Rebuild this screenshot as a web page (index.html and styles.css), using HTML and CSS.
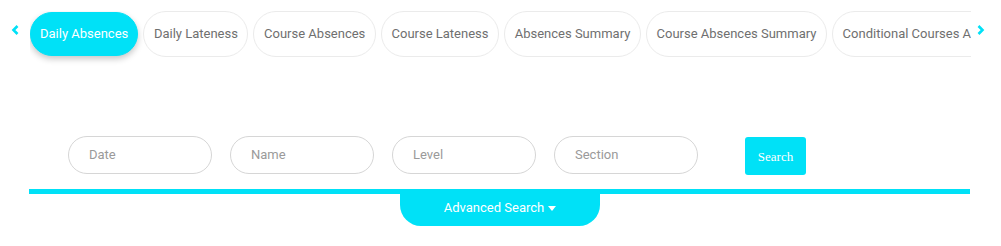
FILE: index.html
```html
<!DOCTYPE html>
<html>
<head>
<meta charset="utf-8">
<link rel="stylesheet" href="styles.css">
</head>
<body>
<div class="tabs-row">
  <div class="arrow arrow-left">
    <svg width="9" height="12" viewBox="0 0 9 12"><path d="M6.5 2 L2.5 6 L6.5 10" fill="none" stroke="#00e1f7" stroke-width="2.6"/></svg>
  </div>
  <div class="tabs-viewport">
    <div class="tabs">
      <div class="tab active">Daily Absences</div>
      <div class="tab">Daily Lateness</div>
      <div class="tab">Course Absences</div>
      <div class="tab">Course Lateness</div>
      <div class="tab">Absences Summary</div>
      <div class="tab">Course Absences Summary</div>
      <div class="tab">Conditional Courses Absences</div>
    </div>
  </div>
  <div class="arrow arrow-right">
    <svg width="9" height="12" viewBox="0 0 9 12"><path d="M2.5 2 L6.5 6 L2.5 10" fill="none" stroke="#00e1f7" stroke-width="2.6"/></svg>
  </div>
</div>

<div class="search-row">
  <div class="field">Date</div>
  <div class="field">Name</div>
  <div class="field">Level</div>
  <div class="field">Section</div>
  <button class="search-btn">Search</button>
</div>

<div class="divider"></div>
<div class="adv-wrap">
  <div class="adv">Advanced Search <span class="caret"></span></div>
</div>
</body>
</html>
```
FILE: styles.css
```css
* { box-sizing: border-box; }
body {
  margin: 0;
  background: #fff;
  font-family: Roboto, "Liberation Sans", sans-serif;
}
.tabs-row {
  display: flex;
  align-items: flex-start;
  padding-top: 11px;
  height: 68px;
}
.arrow {
  display: flex;
  align-items: center;
  height: 38px;
}
.arrow-left {
  width: 30px;
  padding-left: 11px;
}
.arrow-right {
  padding-left: 5px;
}
.tabs-viewport {
  width: 941px;
  overflow: hidden;
  padding-bottom: 10px;
}
.tabs {
  display: flex;
  gap: 5px;
  white-space: nowrap;
}
.tab {
  flex: none;
  height: 46px;
  padding: 0 9.6px 1px;
  border: 1px solid #ebebeb;
  border-radius: 23px;
  display: flex;
  align-items: center;
  font-size: 13px;
  color: #6f6f6f;
}
.tab.active {
  background: #00e1f7;
  border-color: #00e1f7;
  color: #fff;
  height: 44px;
  margin-top: 1px;
  box-shadow: 0 3px 6px rgba(0,0,0,0.22);
  padding: 0 9px 1px;
}
.search-row {
  display: flex;
  align-items: center;
  gap: 18px;
  margin-top: 67px;
  padding-left: 68px;
  height: 39px;
}
.field {
  width: 144px;
  height: 38px;
  border: 1px solid #d6d6d6;
  border-radius: 19px;
  padding-left: 20px;
  display: flex;
  align-items: center;
  font-size: 13px;
  color: #9a9a9a;
}
.search-btn {
  margin-left: 29px;
  width: 61px;
  height: 38px;
  border: none;
  border-radius: 3px;
  background: #00e1f7;
  color: #fff;
  font-family: "Liberation Serif", serif;
  font-size: 13px;
  padding: 3px 0 0;
  margin-top: 2px;
}
.divider {
  margin-top: 15px;
  margin-left: 29px;
  width: 941px;
  height: 5px;
  background: #00e1f7;
}
.adv-wrap {
  padding-left: 400px;
}
.adv {
  width: 200px;
  height: 32px;
  background: #00e1f7;
  border-radius: 0 0 21px 21px;
  color: #fff;
  font-size: 13px;
  display: flex;
  align-items: center;
  justify-content: center;
  padding-bottom: 5px;
}
.caret {
  display: inline-block;
  width: 0;
  height: 0;
  border-left: 4px solid transparent;
  border-right: 4px solid transparent;
  border-top: 5px solid #fff;
  margin-left: 4px;
  margin-top: 1px;
}
```
